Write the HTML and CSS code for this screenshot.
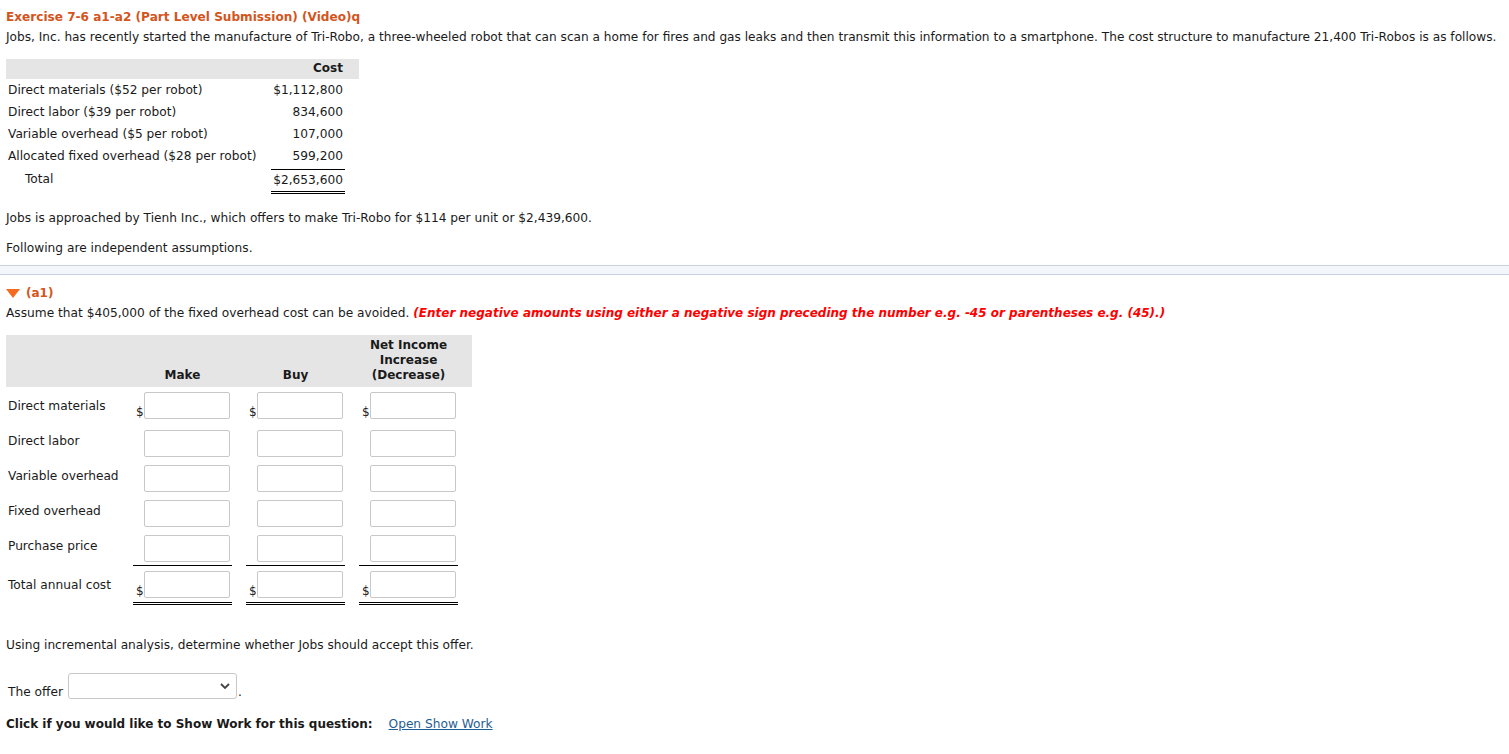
FILE: index.html
```html
<!DOCTYPE html>
<html lang="en">
<head>
<meta charset="utf-8">
<title>Exercise 7-6 a1-a2</title>
<link rel="stylesheet" href="styles.css">
</head>
<body>
<div class="page">
  <div class="intro">
    <h1 class="title">Exercise 7-6 a1-a2 (Part Level Submission) (Video)q</h1>
    <p class="text lead">Jobs, Inc. has recently started the manufacture of Tri-Robo, a three-wheeled robot that can scan a home for fires and gas leaks and then transmit this information to a smartphone. The cost structure to manufacture 21,400 Tri-Robos is as follows.</p>

    <table class="cost">
      <thead>
        <tr><th class="cost-label"></th><th class="cost-amt cost-head">Cost</th></tr>
      </thead>
      <tbody>
        <tr><td class="cost-label">Direct materials ($52 per robot)</td><td class="cost-amt"><span class="amt">$1,112,800</span></td></tr>
        <tr><td class="cost-label">Direct labor ($39 per robot)</td><td class="cost-amt"><span class="amt">834,600</span></td></tr>
        <tr><td class="cost-label">Variable overhead ($5 per robot)</td><td class="cost-amt"><span class="amt">107,000</span></td></tr>
        <tr><td class="cost-label">Allocated fixed overhead ($28 per robot)</td><td class="cost-amt"><span class="amt">599,200</span></td></tr>
        <tr class="total-row"><td class="cost-label total-label">Total</td><td class="cost-amt"><span class="amt amt-total">$2,653,600</span></td></tr>
      </tbody>
    </table>

    <p class="text offer-text">Jobs is approached by Tienh Inc., which offers to make Tri-Robo for $114 per unit or $2,439,600.</p>
    <p class="text follow-text">Following are independent assumptions.</p>
  </div>

  <div class="separator"></div>

  <div class="part">
    <div class="part-head"><span class="tri"></span><span>(a1)</span></div>
    <p class="text">Assume that $405,000 of the fixed overhead cost can be avoided. <em class="hint">(Enter negative amounts using either a negative sign preceding the number e.g. -45 or parentheses e.g. (45).)</em></p>

    <table class="grid">
      <thead>
        <tr>
          <th class="g-label"></th>
          <th class="g-col">Make</th>
          <th class="g-col">Buy</th>
          <th class="g-col">Net Income<br>Increase<br>(Decrease)</th>
        </tr>
      </thead>
      <tbody>
        <tr class="r-first">
          <td class="g-label">Direct materials</td>
          <td class="g-cell"><div class="box"><span class="cur">$</span><input class="num" type="text"></div></td>
          <td class="g-cell"><div class="box"><span class="cur">$</span><input class="num" type="text"></div></td>
          <td class="g-cell"><div class="box"><span class="cur">$</span><input class="num" type="text"></div></td>
        </tr>
        <tr class="r-mid">
          <td class="g-label">Direct labor</td>
          <td class="g-cell"><div class="box"><span class="cur"></span><input class="num" type="text"></div></td>
          <td class="g-cell"><div class="box"><span class="cur"></span><input class="num" type="text"></div></td>
          <td class="g-cell"><div class="box"><span class="cur"></span><input class="num" type="text"></div></td>
        </tr>
        <tr class="r-mid">
          <td class="g-label">Variable overhead</td>
          <td class="g-cell"><div class="box"><span class="cur"></span><input class="num" type="text"></div></td>
          <td class="g-cell"><div class="box"><span class="cur"></span><input class="num" type="text"></div></td>
          <td class="g-cell"><div class="box"><span class="cur"></span><input class="num" type="text"></div></td>
        </tr>
        <tr class="r-mid">
          <td class="g-label">Fixed overhead</td>
          <td class="g-cell"><div class="box"><span class="cur"></span><input class="num" type="text"></div></td>
          <td class="g-cell"><div class="box"><span class="cur"></span><input class="num" type="text"></div></td>
          <td class="g-cell"><div class="box"><span class="cur"></span><input class="num" type="text"></div></td>
        </tr>
        <tr class="r-mid r-under">
          <td class="g-label">Purchase price</td>
          <td class="g-cell"><div class="box"><span class="cur"></span><input class="num" type="text"></div></td>
          <td class="g-cell"><div class="box"><span class="cur"></span><input class="num" type="text"></div></td>
          <td class="g-cell"><div class="box"><span class="cur"></span><input class="num" type="text"></div></td>
        </tr>
        <tr class="r-total">
          <td class="g-label">Total annual cost</td>
          <td class="g-cell"><div class="box"><span class="cur">$</span><input class="num" type="text"></div></td>
          <td class="g-cell"><div class="box"><span class="cur">$</span><input class="num" type="text"></div></td>
          <td class="g-cell"><div class="box"><span class="cur">$</span><input class="num" type="text"></div></td>
        </tr>
      </tbody>
    </table>

    <p class="text using-text">Using incremental analysis, determine whether Jobs should accept this offer.</p>

    <div class="offer-row">
      <span class="offer-label">The offer</span>
      <span class="select-wrap">
        <select class="choice"><option></option><option>should be accepted</option><option>should be rejected</option></select>
        <svg class="chev" width="10" height="6" viewBox="0 0 10 6"><path d="M1 1 L5 5 L9 1" fill="none" stroke="#444" stroke-width="1.8"/></svg>
      </span>
      <span class="offer-dot">.</span>
    </div>

    <div class="showwork">
      <strong>Click if you would like to Show Work for this question:</strong>
      <a class="sw-link" href="#">Open Show Work</a>
    </div>
  </div>
</div>
</body>
</html>
```

FILE: styles.css
```css
html, body {
  margin: 0;
  padding: 0;
  background: #ffffff;
}

body {
  font-family: "DejaVu Sans", Verdana, sans-serif;
  font-size: 12.2px;
  color: #1a1a1a;
}

.page {
  padding-top: 7px;
}

.intro {
  padding: 0 0 0 6px;
}

.part {
  padding: 0 6px;
}

.title {
  margin: 0;
  font-size: 12.1px;
  line-height: 20px;
  font-weight: bold;
  color: #d4541c;
}

.text {
  margin: 0;
  line-height: 20px;
}

.lead {
  font-size: 12.15px;
  white-space: nowrap;
}

/* cost table */
.cost {
  border-collapse: collapse;
  margin-top: 12px;
}

.cost th,
.cost td {
  padding: 0;
}

.cost thead tr {
  background: #e5e5e5;
}

.cost th {
  height: 20px;
  line-height: 18px;
  vertical-align: top;
  font-weight: bold;
  font-size: 12px;
}

.cost-label {
  width: 257px;
  padding-left: 2px !important;
  text-align: left;
  line-height: 22px;
  height: 22px;
}

.cost-amt {
  width: 80px;
  padding-right: 14px !important;
  text-align: right;
  line-height: 22px;
}

.cost th.cost-head {
  padding-right: 16px !important;
  width: 78px;
}

.amt {
  display: inline-block;
  padding: 0 2px;
}

.total-row td {
  padding-top: 2px !important;
  vertical-align: top;
}

.total-label {
  text-indent: 17px;
  line-height: 20px;
  padding-top: 4px !important;
}

.amt-total {
  min-width: 68px;
  line-height: 21px;
  border-top: 1px solid #000;
  border-bottom: 3px double #000;
}

.offer-text {
  margin-top: 14px;
}

.follow-text {
  margin-top: 10px;
}

/* separator */
.separator {
  margin-top: 7px;
  height: 8px;
  background: #f3f7fb;
  border-top: 1px solid #c9d2de;
  border-bottom: 1px solid #c9d2de;
}

/* part */
.part-head {
  margin-top: 8px;
  display: flex;
  align-items: center;
  gap: 6px;
  height: 20px;
  font-weight: bold;
  font-size: 12px;
  color: #d4541c;
}

.tri {
  width: 0;
  height: 0;
  border-left: 7.5px solid transparent;
  border-right: 7.5px solid transparent;
  border-top: 9px solid #f26b21;
  margin-top: 1px;
}

.hint {
  color: #ff0000;
  font-weight: bold;
  font-style: italic;
  font-size: 12px;
}

/* grid */
.grid {
  border-collapse: collapse;
  margin-top: 12px;
}

.grid th,
.grid td {
  padding: 0;
}

.grid thead tr {
  background: #e5e5e5;
}

.grid th {
  height: 52px;
  box-sizing: border-box;
  padding: 2px 14px 4px 0;
  vertical-align: bottom;
  line-height: 15px;
  font-weight: bold;
  font-size: 12px;
  text-align: center;
}

.grid th.g-label {
  padding: 0;
}

.g-label {
  width: 125px;
  padding-left: 2px !important;
  text-align: left;
  vertical-align: top;
  line-height: 16px;
}

.g-col {
  width: 99px;
}

.g-cell {
  width: 99px;
  padding-right: 14px !important;
  vertical-align: top;
}

.box {
  display: flex;
  align-items: flex-end;
  padding-left: 3px;
}

.cur {
  width: 8px;
  flex: none;
  font-size: 12px;
  line-height: 12px;
  padding-bottom: 1px;
}

.num {
  box-sizing: border-box;
  width: 86px;
  height: 27px;
  margin: 0;
  padding: 0 4px;
  border: 1px solid #c8c8c8;
  border-radius: 2px;
  background: #fff;
  font: inherit;
}

.r-first .g-label { padding-top: 11px; }
.r-first .box { padding-top: 5px; padding-bottom: 6px; }

.r-mid .g-label { padding-top: 8px; }
.r-mid .box { padding-top: 5px; padding-bottom: 3px; }

.r-under .box { border-bottom: 1px solid #000; }

.r-total .g-label { padding-top: 11px; }
.r-total .box {
  padding-top: 5px;
  padding-bottom: 4px;
  border-bottom: 3px double #000;
}

.using-text {
  margin-top: 30px;
}

.offer-row {
  margin-top: 18px;
  display: flex;
  align-items: flex-end;
}

.offer-label {
  line-height: 14px;
  padding-left: 2px;
  padding-right: 5px;
}

.select-wrap {
  position: relative;
  display: inline-block;
}

.choice {
  display: block;
  box-sizing: border-box;
  width: 169px;
  height: 26px;
  margin: 0;
  border: 1px solid #c8c8c8;
  border-radius: 3px;
  background: #fff;
  -webkit-appearance: none;
  appearance: none;
  font: inherit;
  padding: 0 24px 0 6px;
}

.chev {
  position: absolute;
  right: 7px;
  top: 10px;
  pointer-events: none;
}

.offer-dot {
  line-height: 14px;
  padding-left: 1px;
}

.showwork {
  margin-top: 15px;
  line-height: 20px;
}

.showwork strong {
  font-weight: bold;
  font-size: 12px;
}

.sw-link {
  margin-left: 12px;
  color: #1f5e94;
  text-decoration: underline;
}
```
